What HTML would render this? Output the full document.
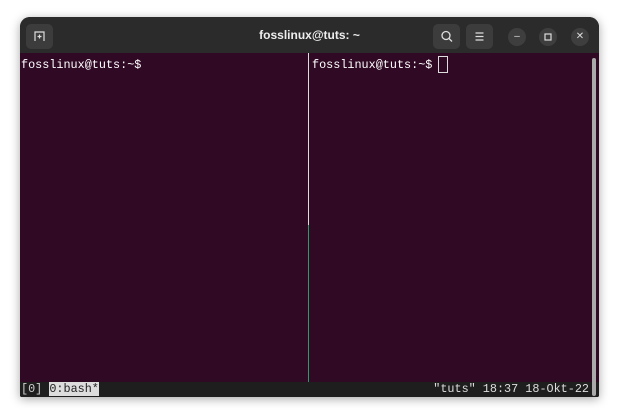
<!DOCTYPE html>
<html><head><style>
body{margin:0;width:619px;height:420px;background:#fff;position:relative;overflow:hidden;font-family:"Liberation Sans",sans-serif}
.win{position:absolute;left:20px;top:17px;width:579px;height:380px;border-radius:10px 10px 2px 2px;background:#300a24;overflow:hidden;box-shadow:0 2px 10px rgba(0,0,0,.35)}
.tb{position:absolute;left:0;top:0;width:579px;height:36px;background:#2b2b2b}
.title{position:absolute;left:0;width:579px;top:11px;text-align:center;color:#eee;font-weight:bold;font-size:12px}
.btn{position:absolute;top:7px;width:27px;height:25px;border-radius:5px;background:#3c3c3c}
.c{position:absolute;top:11px;width:18px;height:18px;border-radius:50%;background:#3e3e3e;color:#ddd;font-size:10px;text-align:center;line-height:18px}
.mono{font-family:"Liberation Mono",monospace;font-size:11.8px;color:#fff;position:absolute;white-space:pre}
</style></head><body>
<div class="win">
<div class="tb">
<div class="btn" style="left:6px"><svg width="27" height="25"><path d="M9 17V8h9v9M11.5 12.5h4M13.5 10.5v4" stroke="#ddd" stroke-width="1.2" fill="none"/></svg></div>
<div class="title">fosslinux@tuts: ~</div>
<div class="btn" style="left:413px"><svg width="27" height="25"><circle cx="13" cy="11.5" r="4" stroke="#ddd" stroke-width="1.3" fill="none"/><path d="M16 14.5l3 3" stroke="#ddd" stroke-width="1.3"/></svg></div>
<div class="btn" style="left:446px"><svg width="27" height="25"><path d="M9.5 9h8M9.5 12.5h8M9.5 16h8" stroke="#ddd" stroke-width="1.2"/></svg></div>
<div class="c" style="left:488px">–</div>
<div class="c" style="left:519px"><svg width="18" height="18"><rect x="6" y="6" width="6" height="6" stroke="#ddd" stroke-width="1.2" fill="none"/></svg></div>
<div class="c" style="left:551px">✕</div>
</div>
<div class="mono" style="left:1px;top:41px">fosslinux@tuts:~$</div>
<div class="mono" style="left:292px;top:41px">fosslinux@tuts:~$ </div>
<div style="position:absolute;left:418px;top:39px;width:8px;height:15px;border:1px solid #ddd"></div>
<div style="position:absolute;left:288px;top:36px;width:1px;height:172px;background:#ddd"></div>
<div style="position:absolute;left:288px;top:208px;width:1px;height:157px;background:#2e9a6a"></div>
<div style="position:absolute;left:0;top:365px;width:579px;height:15px;background:#1e1e1e"></div>
<div class="mono" style="left:1px;top:365px;color:#ccc">[0] <span style="background:#ddd;color:#222">0:bash*</span></div>
<div class="mono" style="right:10px;top:365px;color:#ddd">"tuts" 18:37 18-Okt-22</div>
<div style="position:absolute;left:572px;top:41px;width:4px;height:338px;border-radius:2px;background:#aaa"></div>
</div>
</body></html>
